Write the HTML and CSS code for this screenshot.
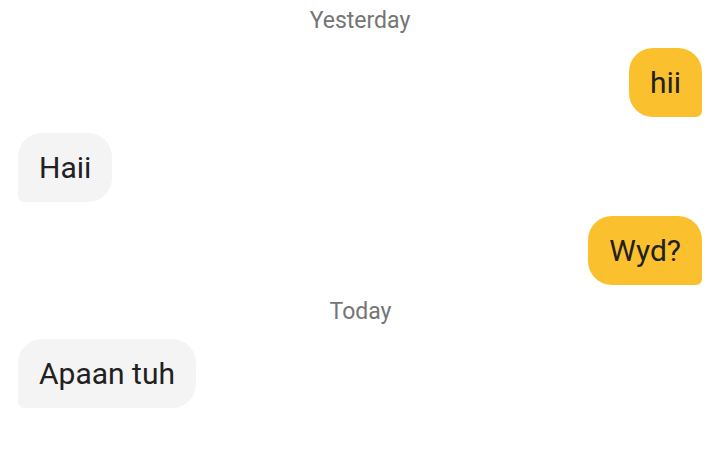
FILE: index.html
```html
<!DOCTYPE html>
<html>
<head>
<meta charset="utf-8">
<link rel="stylesheet" href="styles.css">
</head>
<body>
<div class="chat">
  <div class="date date-first">Yesterday</div>
  <div class="msg out m1"><span class="bubble">hii</span></div>
  <div class="msg in m2"><span class="bubble">Haii</span></div>
  <div class="msg out m3"><span class="bubble">Wyd?</span></div>
  <div class="date date-second">Today</div>
  <div class="msg in m4"><span class="bubble">Apaan tuh</span></div>
</div>
</body>
</html>
```

FILE: styles.css
```css
html, body {
  margin: 0;
  padding: 0;
  background: #ffffff;
}
.chat {
  display: flex;
  flex-direction: column;
  padding: 0 17px 0 18px;
  font-family: Roboto, "Noto Sans", sans-serif;
}
.date {
  text-align: center;
  color: #757575;
  font-size: 23px;
  line-height: 26px;
  height: 26px;
}
.date-first { margin-top: 8px; }
.date-second { margin-top: 14px; padding-left: 1px; }
.msg {
  display: flex;
}
.msg.out { justify-content: flex-end; }
.msg.in { justify-content: flex-start; }
.m1 { margin-top: 14px; }
.m2 { margin-top: 16px; }
.m3 { margin-top: 14px; }
.m4 { margin-top: 14px; }
.bubble {
  display: block;
  font-size: 30px;
  line-height: 35px;
  padding: 17px 21px;
  color: #212121;
}
.out .bubble {
  background: #fbc02d;
  border-radius: 24px 24px 6px 24px;
}
.in .bubble {
  background: #f4f4f4;
  border-radius: 24px 24px 24px 6px;
}
```
